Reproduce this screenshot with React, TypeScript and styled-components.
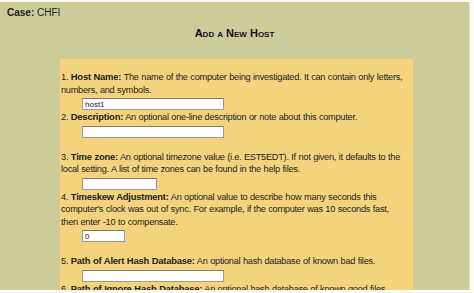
import React from 'react';
import styled, { createGlobalStyle } from 'styled-components';

const GlobalStyle = createGlobalStyle`
  html, body {
    margin: 0;
    padding: 0;
    background: #fbfaf3;
    font-family: "Liberation Sans", Arial, sans-serif;
  }
`;

const Frame = styled.div`
  margin-top: 2px;
  width: 469px;
  height: 288px;
  background-color: #cccc99;
  border-right: 1px solid #e4e4d6;
  overflow: hidden;
  color: #222;
`;

const CaseLine = styled.div`
  padding: 5px 0 0 7px;
  font-size: 10px;
  line-height: 12px;
`;

const CaseLabel = styled.b`
  font-weight: bold;
`;

const Title = styled.h1`
  margin: 8px 0 0;
  text-align: center;
  font-size: 11px;
  line-height: 12px;
  font-weight: bold;
  font-variant: small-caps;
  color: #111;
  font-family: "Liberation Sans", Arial, sans-serif;
`;

const Panel = styled.div`
  margin: 20px 0 0 60px;
  width: 353px;
  padding: 12px 8px 0 1px;
  box-sizing: border-box;
  background-color: #f5d37c;
  font-size: 9.2px;
  letter-spacing: -0.25px;
  word-spacing: 0.3px;
  line-height: 12.5px;
`;

const Item = styled.div<{ $gapAfter?: boolean }>`
  margin-bottom: ${(p) => (p.$gapAfter ? '13px' : '0')};
`;

const Label = styled.b`
  font-weight: bold;
  font-family: "Liberation Sans Narrow", "Arial Narrow", "Liberation Sans", sans-serif;
  font-size: 9.4px;
  letter-spacing: -0.2px;
`;

const Field = styled.input<{ $w: number }>`
  display: block;
  margin: 2px 0 1px 21px;
  width: ${(p) => p.$w}px;
  height: 12px;
  box-sizing: border-box;
  padding: 0 2px;
  border: 1px solid #9a9a9a;
  border-top-color: #7a7a7a;
  background: #fff;
  font-size: 8px;
  font-family: "Liberation Sans", Arial, sans-serif;
  color: #222;
  outline: none;
`;

type Entry = { n: number; label: string; text: string; w: number; value?: string; gap?: boolean };

const entries: Entry[] = [
  { n: 1, label: 'Host Name:', text: 'The name of the computer being investigated. It can contain only letters, numbers, and symbols.', w: 142, value: 'host1' },
  { n: 2, label: 'Description:', text: 'An optional one-line description or note about this computer.', w: 142, gap: true },
  { n: 3, label: 'Time zone:', text: 'An optional timezone value (i.e. EST5EDT). If not given, it defaults to the local setting. A list of time zones can be found in the help files.', w: 75 },
  { n: 4, label: 'Timeskew Adjustment:', text: "An optional value to describe how many seconds this computer's clock was out of sync. For example, if the computer was 10 seconds fast, then enter -10 to compensate.", w: 43, value: '0', gap: true },
  { n: 5, label: 'Path of Alert Hash Database:', text: 'An optional hash database of known bad files.', w: 142 },
  { n: 6, label: 'Path of Ignore Hash Database:', text: 'An optional hash database of known good files.', w: 142 },
];

const App: React.FC = () => (
  <>
    <GlobalStyle />
    <Frame>
      <CaseLine>
        <CaseLabel>Case:</CaseLabel> CHFI
      </CaseLine>
      <Title>Add a New Host</Title>
      <Panel>
        {entries.map((e) => (
          <Item key={e.n} $gapAfter={e.gap}>
            {e.n}. <Label>{e.label}</Label> {e.text}
            <Field $w={e.w} defaultValue={e.value ?? ''} />
          </Item>
        ))}
      </Panel>
    </Frame>
  </>
);

export default App;
